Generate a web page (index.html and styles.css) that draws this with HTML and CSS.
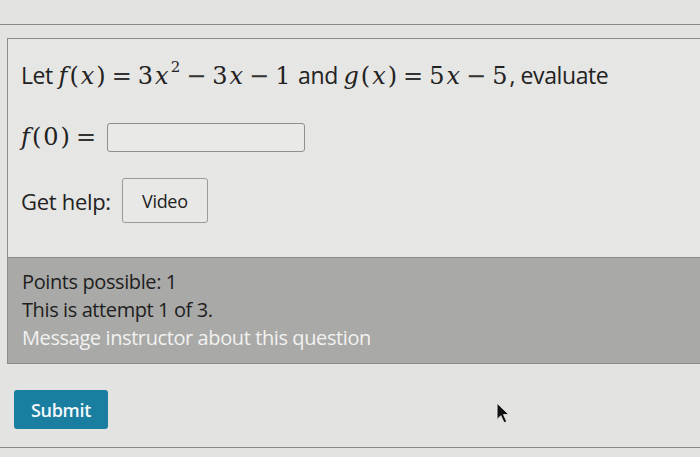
FILE: index.html
```html
<!DOCTYPE html>
<html>
<head>
<meta charset="utf-8">
<link rel="stylesheet" href="styles.css">
</head>
<body>
<div class="page">
  <div class="topbar"></div>
  <div class="question">
    <div class="qbody">
      <p class="prompt">Let <span class="m"><i>f</i>(<i>x</i>)<span class="op">=</span>3<i>x</i><sup>2</sup><span class="op">−</span>3<i>x</i><span class="op">−</span>1</span> and <span class="m"><i>g</i>(<i>x</i>)<span class="op">=</span>5<i>x</i><span class="op">−</span>5</span>, evaluate</p>
      <div class="answer">
        <span class="m"><i>f</i>(0)<span class="op">=</span></span>
        <span class="input"></span>
      </div>
      <div class="help">
        <span class="help-label">Get help:</span>
        <span class="video-btn">Video</span>
      </div>
    </div>
    <div class="qinfo">
      <div>Points possible: 1</div>
      <div>This is attempt 1 of 3.</div>
      <div class="msg">Message instructor about this question</div>
    </div>
  </div>
  <div class="actions">
    <span class="submit">Submit</span>
    <svg class="cursor" width="15" height="22" viewBox="0 0 14 20"><path d="M1 1 L1 16 L4.5 12.5 L7.5 19 L10 18 L7 11.5 L12 11.5 Z" fill="#111" stroke="#eee" stroke-width="0.8"/></svg>
  </div>
</div>
</body>
</html>
```
FILE: styles.css
```css
html, body {
  margin: 0;
  padding: 0;
  background: #e3e3e1;
  overflow: hidden;
}
.page {
  width: 700px;
  height: 457px;
  font-family: "Open Sans", "Noto Sans", sans-serif;
  color: #222;
  display: flex;
  flex-direction: column;
}
.topbar {
  height: 24px;
  border-bottom: 1px solid #8a8a8a;
  flex: none;
}
.question {
  margin: 13px -20px 0 7px;
  border: 1px solid #8c8c8c;
  flex: none;
}
.qbody {
  padding: 21px 14px 34px 13px;
  background: #e6e6e4;
}
.prompt {
  margin: 0;
  font-size: 23px;
  line-height: 30px;
  letter-spacing: -0.4px;
  white-space: nowrap;
}
.m {
  font-family: "DejaVu Serif", "Liberation Serif", serif;
  font-size: 24px;
  letter-spacing: 2px;
}
.m i {
  font-style: italic;
}
.op {
  display: inline-block;
  margin: 0 6px 0 4px;
  letter-spacing: 0;
  color: #333;
}
.m sup {
  font-size: 15px;
  line-height: 0;
  vertical-align: 12px;
}
.answer {
  display: flex;
  align-items: center;
  gap: 5px;
  margin-top: 30px;
  height: 32px;
}
.input {
  width: 196px;
  height: 27px;
  border: 1px solid #8f8f8f;
  border-radius: 3px;
  background: #e9e9e7;
}
.help {
  display: flex;
  align-items: center;
  gap: 11px;
  margin-top: 25px;
}
.help-label {
  font-size: 22px;
  letter-spacing: -0.3px;
}
.video-btn {
  display: inline-flex;
  align-items: center;
  justify-content: center;
  width: 84px;
  height: 43px;
  border: 1px solid #9a9a9a;
  border-radius: 3px;
  font-size: 18px;
  letter-spacing: -0.3px;
  background: #e8e8e6;
}
.qinfo {
  background: #a9a9a7;
  border-top: 1px solid #8a8a8a;
  padding: 10px 14px 11px 14px;
  font-size: 20px;
  line-height: 28px;
  letter-spacing: -0.4px;
  color: #1e1e1e;
}
.qinfo .msg {
  color: #f2f2f0;
}
.actions {
  position: relative;
  flex: 1;
  display: flex;
  align-items: center;
  padding: 0 14px;
  border-bottom: 1px solid #8a8a8a;
  margin-bottom: 9px;
}
.submit {
  display: inline-flex;
  align-items: center;
  justify-content: center;
  width: 94px;
  height: 39px;
  margin-top: 8px;
  background: #1a7ea0;
  color: #f4f8fa;
  border-radius: 3px;
  font-size: 18px;
  font-weight: 600;
  letter-spacing: -0.3px;
}
.cursor {
  position: absolute;
  left: 496px;
  top: 38px;
}
```
